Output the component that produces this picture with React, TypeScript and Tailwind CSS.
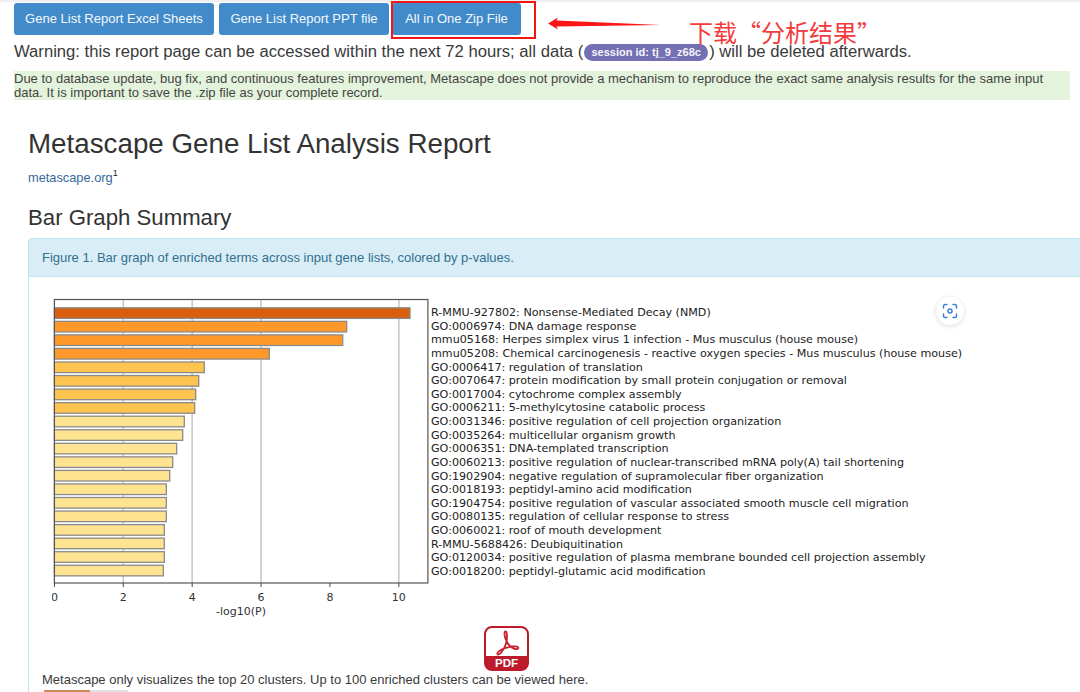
const bars: [number, string][] = [
  [410, "#d95f0e"], [346.7, "#fe9929"], [342.7, "#fe9929"], [269.3, "#fe9929"],
  [204.3, "#fec44f"], [198.7, "#fec44f"], [195.7, "#fec44f"], [194.7, "#fec44f"],
  [184.3, "#fee391"], [182.7, "#fee391"], [176.7, "#fee391"], [172.7, "#fee391"],
  [169.7, "#fee391"], [166.3, "#fee391"], [166.3, "#fee391"], [166.3, "#fee391"],
  [164.3, "#fee391"], [164.3, "#fee391"], [164.3, "#fee391"], [163.3, "#fee391"],
];

const terms = [
  "R-MMU-927802: Nonsense-Mediated Decay (NMD)",
  "GO:0006974: DNA damage response",
  "mmu05168: Herpes simplex virus 1 infection - Mus musculus (house mouse)",
  "mmu05208: Chemical carcinogenesis - reactive oxygen species - Mus musculus (house mouse)",
  "GO:0006417: regulation of translation",
  "GO:0070647: protein modification by small protein conjugation or removal",
  "GO:0017004: cytochrome complex assembly",
  "GO:0006211: 5-methylcytosine catabolic process",
  "GO:0031346: positive regulation of cell projection organization",
  "GO:0035264: multicellular organism growth",
  "GO:0006351: DNA-templated transcription",
  "GO:0060213: positive regulation of nuclear-transcribed mRNA poly(A) tail shortening",
  "GO:1902904: negative regulation of supramolecular fiber organization",
  "GO:0018193: peptidyl-amino acid modification",
  "GO:1904754: positive regulation of vascular associated smooth muscle cell migration",
  "GO:0080135: regulation of cellular response to stress",
  "GO:0060021: roof of mouth development",
  "R-MMU-5688426: Deubiquitination",
  "GO:0120034: positive regulation of plasma membrane bounded cell projection assembly",
  "GO:0018200: peptidyl-glutamic acid modification",
];

const OX = 52;
const OY = 297;
const x0 = 54.4 - OX;
const unit = 34.44;

function Chart() {
  return (
    <svg width="378" height="322" viewBox="0 0 378 322" className="shrink-0 block">
      {[2, 4, 6, 10].map((t) => (
        <line key={t} x1={x0 + t * unit} x2={x0 + t * unit} y1={2} y2={286} stroke="#c8c8c8" strokeWidth="1.6" />
      ))}
      {bars.map(([r, c], i) => (
        <rect key={i} x={x0} y={307.8 - OY + i * 13.55} width={r - 54.4} height={10.6} fill={c} stroke="#8a8a8a" strokeWidth="1.3" />
      ))}
      <rect x={x0} y={2.5} width={373.5} height={283.5} fill="none" stroke="#555" strokeWidth="1.2" />
      {[0, 2, 4, 6, 8, 10].map((t) => (
        <g key={t}>
          <line x1={x0 + t * unit} x2={x0 + t * unit} y1={286} y2={290} stroke="#444" strokeWidth="1" />
          <text x={x0 + t * unit} y={304} textAnchor="middle" fontSize="11" fill="#333" fontFamily="'DejaVu Sans', sans-serif">{t}</text>
        </g>
      ))}
      <text x={189} y={318} textAnchor="middle" fontSize="11" fill="#333" fontFamily="'DejaVu Sans', sans-serif">-log10(P)</text>
    </svg>
  );
}

function PdfIcon() {
  return (
    <svg width="45" height="45" viewBox="0 0 45 45" className="block">
      <rect x="1" y="1" width="43" height="43" rx="7" fill="#fff" stroke="#bd1a2c" strokeWidth="2" />
      <path d="M1 30H44V37a7 7 0 0 1-7 7H8a7 7 0 0 1-7-7Z" fill="#bd1a2c" />
      <path
        d="M21.5 5.5c-1.6 0-1.4 4.4 1 9.500 1.700 3.600 4.200 6.300 7.500 7.600 2.300.9 4.500.5 4.300-.8-.2-1.300-3.200-1.700-6.300-1.300-4.500.6-9.300 2-12.500 4.400-1.600 1.200-2.800 2.900-1.800 3.500 1.200.7 3-1 4.600-3.300 2.600-3.800 4.600-9 4.700-13.900.1-3-.300-5.700-1.500-5.700Z"
        fill="none"
        stroke="#c8202f"
        strokeWidth="1.8"
      />
      <text x="22.500" y="41" textAnchor="middle" fontSize="11.500" fontWeight="700" fill="#fff" fontFamily="'Liberation Sans', sans-serif">PDF</text>
    </svg>
  );
}

function ScanIcon() {
  return (
    <svg width="16" height="16" viewBox="0 0 16 16" fill="none" stroke="#3b82d6" strokeWidth="1.500" strokeLinecap="round">
      <path d="M1.500 5V3a1.500 1.500 0 0 1 1.500-1.500h2M11 1.500h2A1.500 1.500 0 0 1 14.500 3v2M14.500 11v2a1.500 1.500 0 0 1-1.500 1.500h-2M5 14.500H3A1.500 1.500 0 0 1 1.500 13v-2" />
      <circle cx="8" cy="8" r="2" />
    </svg>
  );
}

function Btn({ label, w }: { label: string; w: string }) {
  return (
    <div className={`${w} h-[32px] bg-[#428bca] rounded-[3px] text-[#f4f8fc] text-[13px] flex items-center justify-center`}>
      {label}
    </div>
  );
}

export default function App() {
  return (
    <div className="relative w-[1080px] h-[692px] overflow-hidden bg-white text-[#3a3a3a] font-['Liberation_Sans',sans-serif]">
      <div className="h-[2px] bg-[#efefef]" />
      <div className="flex pl-[14px] pt-[1px]">
        <Btn label="Gene List Report Excel Sheets" w="w-[200px]" />
        <div className="w-[5px]" />
        <Btn label="Gene List Report PPT file" w="w-[170px]" />
        <div className="w-[3px]" />
        <Btn label="All in One Zip File" w="w-[129px]" />
      </div>
      <div className="pl-[14px] mt-[6px] h-[22px] flex items-center text-[16.650px] whitespace-nowrap">
        Warning: this report page can be accessed within the next 72 hours; all data (
        <span className="inline-flex items-center justify-center w-[124px] h-[17px] rounded-full bg-[#7570b3] text-[#f4f4fa] text-[11px] font-bold mx-[1px]">
          session id: tj_9_z68c
        </span>
        ) will be deleted afterwards.
      </div>
      <div className="ml-[14px] w-[1056px] mt-[8px] h-[29px] bg-[#e4f3dc] text-[13px] leading-[14px] pt-[1px] text-[#444]">
        Due to database update, bug fix, and continuous features improvement, Metascape does not provide a mechanism to reproduce the exact same analysis results for the same input data. It is important to save the .zip file as your complete record.
      </div>

      <div className="ml-[28px] mt-[27px]">
        <h1 className="text-[27.750px] leading-[34px] text-[#333]">Metascape Gene List Analysis Report</h1>
        <div className="mt-[8px] h-[18px] text-[12.800px] text-[#34699e] leading-[18px]">
          metascape.org<sup className="text-[9px] text-[#222] top-[-6px]">1</sup>
        </div>
        <h2 className="mt-[18px] text-[22.200px] leading-[26px] text-[#333]">Bar Graph Summary</h2>

        <div className="mt-[7px] w-[1070px] h-[470px] border border-[#bce8f1] rounded-t-[3px]">
          <div className="h-[38px] bg-[#d9edf7] border-b border-[#bce8f1] text-[#31708f] text-[13px] pl-[13px] pt-[1px] flex items-center">
            Figure 1. Bar graph of enriched terms across input gene lists, colored by p-values.
          </div>
          <div className="relative flex pl-[23px] pt-[20px]">
            <Chart />
            <div className="ml-[1px] pt-[9px] text-[11.140px] leading-[13.620px] text-[#222] whitespace-nowrap font-['DejaVu_Sans',sans-serif]">
              {terms.map((t) => (
                <div key={t}>{t}</div>
              ))}
            </div>
            <div className="absolute left-[907px] top-[20px] w-[28px] h-[28px] rounded-full bg-white shadow-[0_1px_5px_rgba(0,0,0,0.14)] flex items-center justify-center">
              <ScanIcon />
            </div>
          </div>
          <div className="flex pl-[455px] mt-[7px]">
            <PdfIcon />
          </div>
          <div className="pl-[13px] mt-[2px] text-[13px] leading-[14px] text-[#3a3a3a]">
            Metascape only visualizes the top 20 clusters. Up to 100 enriched clusters can be viewed here.
          </div>
          <div className="flex pl-[15px] mt-[3px]">
            <div className="w-[46px] h-[10px] bg-[#cf8a5c]" />
            <div className="w-[38px] h-[10px] bg-[#e2e2e2]" />
          </div>
        </div>
      </div>

      <div className="absolute left-[391px] top-[1px] w-[145px] h-[38px] border-[2.500px] border-[#f31414]" />
      <svg className="absolute left-[545px] top-[15px]" width="120" height="18" viewBox="0 0 120 18">
        <path d="M3 8.500 13 2.500 11.500 5.500 116 10 11.500 11.500 13 14.500Z" fill="#fa1616" />
      </svg>
      <div className="absolute left-[689px] top-[16px] text-[24px] leading-[32px] text-[#f43a3a] whitespace-nowrap font-['Noto_Sans_CJK_SC',sans-serif]">
        下载“分析结果”
      </div>
    </div>
  );
}
